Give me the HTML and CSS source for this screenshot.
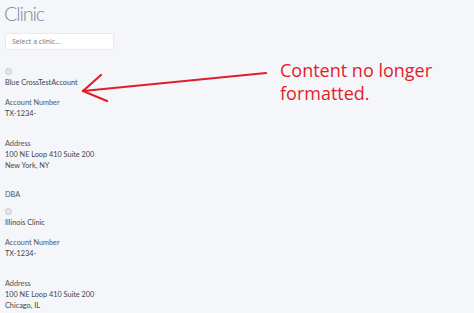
FILE: index.html
```html
<!DOCTYPE html>
<html>
<head>
<meta charset="utf-8">
<link rel="stylesheet" href="styles.css">
</head>
<body>
<div class="page">
  <h1 class="title">Clinic</h1>
  <div class="search"><span class="placeholder">Select a clinic...</span></div>

  <div class="record first">
    <span class="radio"></span>
    <div class="name">Blue CrossTestAccount</div>
    <div class="group">
      <div class="label">Account Number</div>
      <div class="value">TX-1234-</div>
    </div>
    <div class="group addr">
      <div class="label">Address</div>
      <div class="value">100 NE Loop 410 Suite 200</div>
      <div class="value">New York, NY</div>
    </div>
    <div class="group dba">
      <div class="label">DBA</div>
    </div>
  </div>

  <div class="record next">
    <span class="radio"></span>
    <div class="name">Illinois Clinic</div>
    <div class="group">
      <div class="label">Account Number</div>
      <div class="value">TX-1234-</div>
    </div>
    <div class="group addr">
      <div class="label">Address</div>
      <div class="value">100 NE Loop 410 Suite 200</div>
      <div class="value">Chicago, IL</div>
    </div>
  </div>
</div>

<div class="note">Content no longer<br>formatted.</div>
<svg class="arrow" width="474" height="313" viewBox="0 0 474 313">
  <g stroke="#e01e2b" stroke-width="2.2" stroke-linecap="round" fill="none">
    <line x1="266" y1="73" x2="83" y2="91"/>
    <line x1="83" y1="91" x2="101" y2="75"/>
    <line x1="83" y1="91" x2="107" y2="101"/>
  </g>
</svg>
</body>
</html>
```

FILE: styles.css
```css
html, body {
  margin: 0;
  padding: 0;
  background: #f4f6f9;
  width: 474px;
  height: 313px;
  overflow: hidden;
}
body {
  position: relative;
  font-family: "Lato", "Open Sans", sans-serif;
}
.page {
  padding: 0 0 0 5px;
}
.title {
  margin: 0 0 0 -1px;
  padding-top: 1px;
  font-family: "Lato", sans-serif;
  font-weight: 300;
  font-size: 20px;
  line-height: 24px;
  letter-spacing: -1.2px;
  color: #7f8b9c;
}
.search {
  margin-top: 8px;
  width: 109px;
  height: 17px;
  background: #ffffff;
  border: 1px solid #e6e9ee;
  border-radius: 2px;
  display: flex;
  align-items: center;
  padding-left: 6px;
  box-sizing: border-box;
}
.placeholder {
  font-family: "Open Sans", sans-serif;
  font-size: 7px;
  color: #6f7478;
}
.record {
  display: flex;
  flex-direction: column;
  align-items: flex-start;
  font-size: 7.3px;
  line-height: 11px;
  color: #444444;
}
.record.first {
  margin-top: 18px;
}
.record.next {
  margin-top: 8px;
}
.radio {
  display: block;
  width: 7px;
  height: 7px;
  border-radius: 50%;
  background: #e2e4e7;
  border: 0.5px solid #c8ccd2;
  box-sizing: border-box;
  margin-bottom: 2px;
}
.name {
  color: #444444;
}
.group {
  margin-top: 9px;
}
.group.addr {
  margin-top: 19px;
}
.group.dba {
  margin-top: 18px;
}
.label {
  color: #555555;
}
.value {
  color: #444444;
}
.note {
  position: absolute;
  left: 280px;
  top: 59px;
  font-family: "Open Sans", sans-serif;
  font-size: 18px;
  line-height: 23px;
  color: #e01e2b;
}
.arrow {
  position: absolute;
  left: 0;
  top: 0;
  pointer-events: none;
}
```
